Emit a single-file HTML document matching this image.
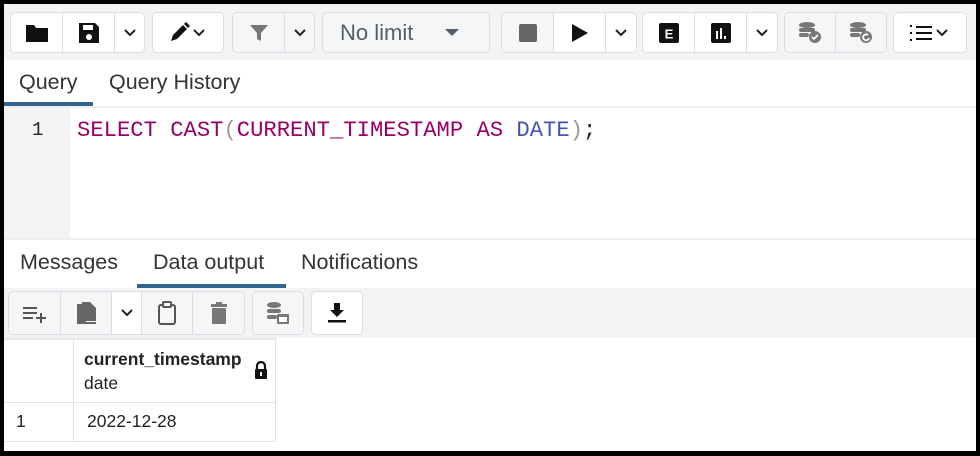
<!DOCTYPE html>
<html><head><style>
*{margin:0;padding:0;box-sizing:border-box}
body{width:980px;height:456px;background:#000;position:relative;overflow:hidden;font-family:"Liberation Sans",Roboto,sans-serif}
#app{position:absolute;left:4px;top:4px;width:972px;height:447px;background:#fff;overflow:hidden}
.a{position:absolute}
.tb{background:#f2f3f5}
.gr{position:absolute;border:1px solid #dadde2;border-radius:5px;overflow:hidden;display:flex}
.gr>div{display:flex;align-items:center;justify-content:center;border-right:1px solid #dadde2;height:100%}
.gr>div:last-child{border-right:none}
.tab{position:absolute;font-size:21.5px;color:#333}
.code{font-family:"Liberation Mono",monospace;font-size:22.2px}
</style></head><body>
<div id="app">
<div class="a tb" style="left:0;top:0;width:972px;height:56px"></div>
<svg width="0" height="0" style="position:absolute"><defs>
<path id="chev" d="M0 0 L5 5 L10 0" fill="none" stroke="#222" stroke-width="2"/>
</defs></svg>
<div class="gr" style="left:6px;top:8px;height:41px;background:#fff">
 <div style="width:52px"><svg width="24" height="20"><path d="M1 2h8l2 3h12v14H1z" fill="#111"/></svg></div>
 <div style="width:52px"><svg width="22" height="22"><path d="M1 1h16l4 4v16H1z" fill="#111"/><rect x="5" y="3" width="10" height="5" fill="#fff"/><circle cx="11" cy="15" r="3" fill="#fff"/></svg></div>
 <div style="width:29px"><svg width="12" height="8"><use href="#chev" x="1" y="1"/></svg></div>
</div>
<div class="gr" style="left:148px;top:8px;height:41px;width:72px;background:#fff">
 <div style="width:72px"><svg width="40" height="22"><path d="M3 19 L5 13 L15 3 L19 7 L9 17Z" fill="#111"/><path d="M16 2l2-2 4 4-2 2z" fill="#111"/><use href="#chev" x="26" y="8"/></svg></div>
</div>
<div class="gr" style="left:228px;top:8px;height:41px;background:#f5f6f7">
 <div style="width:52px"><svg width="20" height="20"><path d="M1 2h18l-7 8v8l-4-2v-6z" fill="#777"/></svg></div>
 <div style="width:29px"><svg width="12" height="8"><use href="#chev" x="1" y="1" stroke="#666"/></svg></div>
</div>
<div class="gr" style="left:318px;top:8px;height:41px;width:168px;background:#f5f6f7">
 <div style="width:168px;justify-content:flex-start;padding-left:17px;font-size:22px;color:#555d6b">No limit<svg style="margin-left:32px" width="14" height="8"><path d="M0 0h14L7 7z" fill="#555d6b"/></svg></div>
</div>
<div class="gr" style="left:497px;top:8px;height:41px;background:#fff">
 <div style="width:52px;background:#f5f6f7"><svg width="18" height="18"><rect width="18" height="18" rx="2" fill="#666"/></svg></div>
 <div style="width:52px"><svg width="18" height="20"><path d="M1 1L17 10L1 19z" fill="#111"/></svg></div>
 <div style="width:30px"><svg width="12" height="8"><use href="#chev" x="1" y="1"/></svg></div>
</div>
<div class="gr" style="left:638px;top:8px;height:41px;background:#fff">
 <div style="width:52px"><svg width="20" height="20"><rect width="20" height="20" rx="2" fill="#111"/><text x="10" y="15.5" font-size="13" font-weight="bold" fill="#fff" text-anchor="middle" font-family="Liberation Sans">E</text></svg></div>
 <div style="width:52px"><svg width="20" height="20"><rect width="20" height="20" rx="2" fill="#111"/><rect x="5" y="8" width="2" height="8" fill="#fff"/><rect x="9" y="5" width="2" height="11" fill="#fff"/><rect x="13" y="13" width="2" height="3" fill="#fff"/></svg></div>
 <div style="width:30px"><svg width="12" height="8"><use href="#chev" x="1" y="1"/></svg></div>
</div>
<div class="gr" style="left:780px;top:8px;height:41px;background:#f5f6f7">
 <div style="width:51px"><svg width="26" height="22"><ellipse cx="10" cy="3" rx="8" ry="3" fill="#777"/><rect x="2" y="6" width="16" height="4" rx="2" fill="#777"/><rect x="2" y="11" width="10" height="4" rx="2" fill="#777"/><circle cx="18" cy="15" r="6" fill="#777"/><path d="M15 15l2 2 4-4" stroke="#fff" stroke-width="1.8" fill="none"/></svg></div>
 <div style="width:50px"><svg width="26" height="22"><ellipse cx="10" cy="3" rx="8" ry="3" fill="#777"/><rect x="2" y="6" width="16" height="4" rx="2" fill="#777"/><rect x="2" y="11" width="10" height="4" rx="2" fill="#777"/><circle cx="18" cy="15" r="6" fill="#777"/><path d="M21 16a3 3 0 1 1-1-3" stroke="#fff" stroke-width="1.8" fill="none"/></svg></div>
</div>
<div class="gr" style="left:889px;top:8px;height:41px;width:74px;background:#fff">
 <div style="width:74px"><svg width="44" height="20"><path d="M2 3h2M2 10h2M2 17h2" stroke="#111" stroke-width="2"/><path d="M8 4h16M8 10h16M8 16h16" stroke="#111" stroke-width="2"/><use href="#chev" x="29" y="7"/></svg></div>
</div>
<div class="tab" style="left:15px;top:66px">Query</div>
<div class="tab" style="left:105px;top:66px">Query History</div>
<div class="a" style="left:0;top:98px;width:89px;height:4px;background:#326690"></div>
<div class="a" style="left:0;top:102px;width:972px;height:2px;background:#eceef0"></div>
<div class="a" style="left:0;top:104px;width:66px;height:130px;background:#f3f4f6"></div>
<div class="a code" style="left:28px;top:115px;color:#222;font-size:19px">1</div>
<div class="a code" style="left:73px;top:114px;white-space:pre"><span style="color:#990066">SELECT CAST</span><span style="color:#999">(</span><span style="color:#990066">CURRENT_TIMESTAMP AS</span> <span style="color:#4455aa">DATE</span><span style="color:#999">)</span><span style="color:#222">;</span></div>
<div class="a" style="left:0;top:234px;width:972px;height:2px;background:#eceef0"></div>
<div class="tab" style="left:16px;top:246px">Messages</div>
<div class="tab" style="left:149px;top:246px">Data output</div>
<div class="tab" style="left:297px;top:246px">Notifications</div>
<div class="a" style="left:133px;top:280px;width:149px;height:4px;background:#326690"></div>
<div class="a tb" style="left:0;top:284px;width:972px;height:50px"></div>
<div class="gr" style="left:4px;top:287px;height:44px;background:#f5f6f7">
 <div style="width:52px"><svg width="26" height="20"><path d="M1 5h14M1 10h14M1 15h10M14 15h10M19 10v10" stroke="#555" stroke-width="2"/></svg></div>
 <div style="width:51px"><svg width="22" height="24"><path d="M2 3h9v18h10v2H2z" fill="#666"/><path d="M7 1h8l6 6v13H7z" fill="#666"/></svg></div>
 <div style="width:30px;background:#fff"><svg width="12" height="8"><use href="#chev" x="1" y="1"/></svg></div>
 <div style="width:51px"><svg width="20" height="24"><rect x="2" y="4" width="16" height="19" rx="2" fill="none" stroke="#555" stroke-width="2"/><rect x="6" y="1" width="8" height="5" rx="1" fill="#f5f6f7" stroke="#555" stroke-width="2"/></svg></div>
 <div style="width:51px"><svg width="16" height="22"><rect x="0" y="2" width="16" height="3" fill="#777"/><rect x="5" y="0" width="6" height="3" fill="#777"/><rect x="1" y="6" width="14" height="16" rx="1" fill="#777"/></svg></div>
</div>
<div class="gr" style="left:248px;top:287px;height:44px;width:52px;background:#f5f6f7">
 <div style="width:52px"><svg width="26" height="24"><ellipse cx="9" cy="4" rx="7" ry="3" fill="#777"/><rect x="2" y="8" width="14" height="4" rx="2" fill="#777"/><rect x="2" y="14" width="10" height="4" rx="2" fill="#777"/><rect x="12" y="13" width="12" height="10" rx="1" fill="#777"/><rect x="14" y="16" width="8" height="5" fill="#fff"/></svg></div>
</div>
<div class="gr" style="left:307px;top:287px;height:44px;width:52px;background:#fff">
 <div style="width:52px"><svg width="20" height="22"><path d="M7 1h6v7h4l-7 7-7-7h4z" fill="#111"/><rect x="1" y="18" width="18" height="2.5" fill="#111"/></svg></div>
</div>
<div class="a" style="left:0;top:334px;width:272px;height:2px;background:#e6e8eb"></div>
<div class="a" style="left:69px;top:334px;width:1px;height:104px;background:#dfe2e6"></div>
<div class="a" style="left:271px;top:334px;width:1px;height:104px;background:#dfe2e6"></div>
<div class="a" style="left:0;top:398px;width:272px;height:1px;background:#dfe2e6"></div>
<div class="a" style="left:0;top:437px;width:272px;height:1px;background:#dfe2e6"></div>
<div class="a" style="left:80px;top:345px;font-size:17.5px;font-weight:bold;color:#222">current_timestamp</div>
<div class="a" style="left:80px;top:369px;font-size:17.5px;color:#222">date</div>
<svg class="a" style="left:249px;top:356px" width="16" height="20"><path d="M4 9V6a4 4 0 0 1 8 0v3" fill="none" stroke="#111" stroke-width="2.2"/><rect x="2" y="9" width="12" height="10" rx="1" fill="#111"/><rect x="7" y="12" width="2" height="4" fill="#fff"/></svg>
<div class="a" style="left:12px;top:407px;font-size:17.5px;color:#222">1</div>
<div class="a" style="left:83px;top:407px;font-size:17.5px;color:#222">2022-12-28</div>
</div>
</body></html>
